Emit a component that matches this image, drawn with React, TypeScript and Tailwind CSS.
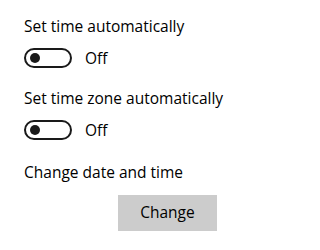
import React from "react";

function Toggle() {
  return (
    <div className="flex items-center">
      <div className="w-[48px] h-[20px] rounded-full border-2 border-[#1a1a1a] flex items-center pl-[4px]">
        <div className="w-[10px] h-[10px] rounded-full bg-[#1a1a1a]" />
      </div>
      <span className="ml-[13px] text-[15.5px] leading-[20px] text-black">Off</span>
    </div>
  );
}

export default function App() {
  return (
    <div
      className="w-[320px] h-[250px] bg-white pl-[24px] pt-[16px] text-black"
      style={{ fontFamily: '"Segoe UI", "Open Sans", sans-serif' }}
    >
      <div className="text-[15.5px] leading-[20px]">Set time automatically</div>
      <div className="mt-[12px]">
        <Toggle />
      </div>
      <div className="mt-[20px] text-[15.5px] leading-[20px]">Set time zone automatically</div>
      <div className="mt-[12px]">
        <Toggle />
      </div>
      <div className="mt-[22px] text-[15.5px] leading-[20px]">Change date and time</div>
      <div className="mt-[13px] pl-[94px]">
        <button className="w-[99px] h-[36px] bg-[#cccccc] text-[15.5px] text-black">Change</button>
      </div>
    </div>
  );
}
